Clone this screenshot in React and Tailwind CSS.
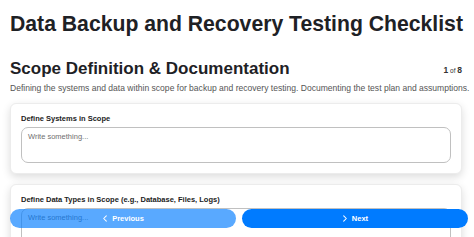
import React from "react";

function Field({ label }) {
  return (
    <div className="rounded-[6px] border border-[#ececec] bg-white p-[10px] shadow-[0_3px_8px_rgba(0,0,0,0.14)]">
      <div className="mb-[3px] text-[7.5px] font-bold leading-[10px] text-[#222]">{label}</div>
      <textarea
        placeholder="Write something..."
        className="block h-[36px] w-full resize-none rounded-[7px] border border-[#c0c0c0] bg-white px-[6px] py-[4px] text-[7.5px] leading-[10px] text-[#333] outline-none placeholder:text-[#6f6f6f]"
        style={{ fontFamily: '"Liberation Sans", Arial, sans-serif' }}
      />
    </div>
  );
}

function Chevron({ dir }) {
  return (
    <svg width="6" height="7" viewBox="0 0 6 8" fill="none" stroke="currentColor" strokeWidth="1.2" strokeLinecap="round" strokeLinejoin="round">
      {dir === "left" ? <path d="M4.5 1 L1.5 4 L4.5 7" /> : <path d="M1.5 1 L4.5 4 L1.5 7" />}
    </svg>
  );
}

export default function App() {
  return (
    <div className="h-[237px] overflow-hidden bg-white px-[10px] pt-[12px] text-[#212529]" style={{ fontFamily: '"Liberation Sans", Arial, sans-serif' }}>
      <h1 className="text-[21.2px] font-bold leading-[24px] text-[#1e2125]">Data Backup and Recovery Testing Checklist</h1>
      <div className="mt-[23px] flex items-center justify-between pr-[2px]">
        <h2 className="text-[17px] font-bold leading-[20px] text-[#1e2125]">Scope Definition &amp; Documentation</h2>
        <div className="leading-[10px] text-[#333]">
          <span className="text-[8.5px] font-bold">1</span>
          <span className="text-[6.5px]"> of </span>
          <span className="text-[8.5px] font-bold">8</span>
        </div>
      </div>
      <p className="mt-[4px] text-[8.55px] leading-[11px] text-[#555] whitespace-nowrap">
        Defining the systems and data within scope for backup and recovery testing. Documenting the test plan and assumptions.
      </p>
      <div className="mt-[9px] mr-[2px] flex flex-col gap-[10px]">
        <Field label="Define Systems in Scope" />
        <Field label="Define Data Types in Scope (e.g., Database, Files, Logs)" />
      </div>
      <div className="fixed bottom-[9px] left-[10px] right-[6px] flex gap-[6px]">
        <button className="flex h-[19px] flex-1 items-center justify-center gap-[4px] rounded-full bg-[#007bff] text-[7.5px] font-bold text-white opacity-65">
          <Chevron dir="left" />
          <span>Previous</span>
        </button>
        <button className="flex h-[19px] flex-1 items-center justify-center gap-[4px] rounded-full bg-[#007bff] text-[7.5px] font-bold text-white">
          <Chevron dir="right" />
          <span>Next</span>
        </button>
      </div>
    </div>
  );
}
